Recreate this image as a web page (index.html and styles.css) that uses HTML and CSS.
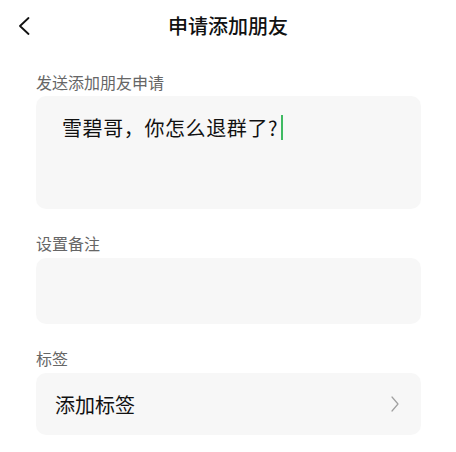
FILE: index.html
```html
<!DOCTYPE html>
<html lang="zh-CN">
<head>
  <meta charset="UTF-8" />
  <meta name="viewport" content="width=device-width, initial-scale=1" />
  <title>申请添加朋友</title>
  <link rel="stylesheet" href="styles.css">
</head>
<body>
  <div class="header">
    <button class="back">
      <svg viewBox="0 0 12 18" fill="none" stroke="currentColor">
        <path stroke-width="1.8" stroke-linecap="round" stroke-linejoin="round" d="M10.5 1L2 9l8.5 8" />
      </svg>
    </button>
    <h1>申请添加朋友</h1>
    <span></span>
  </div>

  <div class="form">
    <div class="field">
      <label>发送添加朋友申请</label>
      <div class="box message">
        <span>雪碧哥，你怎么退群了?</span><span class="cursor"></span>
      </div>
    </div>

    <div class="field">
      <label>设置备注</label>
      <div class="box remark"></div>
    </div>

    <div class="field">
      <label>标签</label>
      <div class="box tags">
        <span>添加标签</span>
        <svg class="arrow" viewBox="0 0 8 16" fill="none" stroke="currentColor">
          <path stroke-width="1.2" stroke-linecap="round" stroke-linejoin="round" d="M1 1l6 7-6 7" />
        </svg>
      </div>
    </div>
  </div>
</body>
</html>
```

FILE: styles.css
```css
* {
  margin: 0;
  padding: 0;
  box-sizing: border-box;
}

body {
  font-family: "Noto Sans CJK SC", "Noto Sans", sans-serif;
  background: #ffffff;
  color: #111111;
  width: 456px;
}

.header {
  height: 52px;
  display: grid;
  grid-template-columns: 1fr auto 1fr;
  align-items: center;
  padding: 0 18px;
}

.back {
  background: none;
  border: none;
  color: #111111;
  width: 12px;
  height: 18px;
  display: flex;
}

.back svg {
  width: 12px;
  height: 18px;
}

h1 {
  font-size: 20px;
  font-weight: 500;
  line-height: 28px;
}

.form {
  padding: 19px 35px 0 36px;
  display: flex;
  flex-direction: column;
  gap: 23px;
}

label {
  display: block;
  font-size: 16px;
  line-height: 22px;
  color: #666666;
  margin-bottom: 4px;
}

.field:first-child label {
  margin-bottom: 3px;
}

.box {
  background: #f7f7f7;
  border-radius: 10px;
}

.message {
  height: 113px;
  padding: 18px 26px;
  font-size: 20px;
  line-height: 28px;
  letter-spacing: 0.6px;
  display: flex;
  align-items: flex-start;
}

.cursor {
  display: inline-block;
  width: 2px;
  height: 25px;
  background: #3fba62;
  margin: 1px 0 0 3px;
}

.remark {
  height: 66px;
}

.tags {
  height: 62px;
  display: flex;
  align-items: center;
  justify-content: space-between;
  padding: 0 22px 0 19px;
  font-size: 20px;
}

.arrow {
  width: 8px;
  height: 16px;
  color: #a0a0a0;
}
```
